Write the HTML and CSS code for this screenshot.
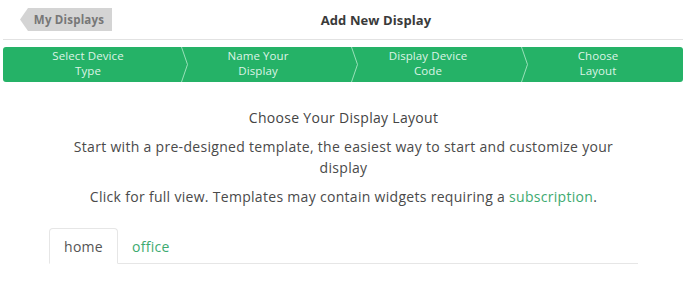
FILE: index.html
```html
<!DOCTYPE html>
<html>
<head>
<meta charset="utf-8">
<link rel="stylesheet" href="styles.css">
</head>
<body>
<div class="page">
  <header class="topbar">
    <a class="back">My Displays</a>
    <h1 class="title">Add New Display</h1>
  </header>
  <div class="divider"></div>
  <ol class="steps">
    <li class="step">Select Device<br>Type</li>
    <li class="step">Name Your<br>Display</li>
    <li class="step">Display Device<br>Code</li>
    <li class="step last">Choose<br>Layout</li>
  </ol>
  <section class="content">
    <h2 class="heading">Choose Your Display Layout</h2>
    <p class="lead">Start with a pre-designed template, the easiest way to start and customize your display</p>
    <p class="note">Click for full view. Templates may contain widgets requiring a <a class="link">subscription</a>.</p>
    <div class="tabs">
      <div class="tab active">home</div>
      <div class="tab">office</div>
    </div>
  </section>
</div>
</body>
</html>
```
FILE: styles.css
```css
* { box-sizing: border-box; }
html, body { margin: 0; padding: 0; background: #fff; }
.page { width: 696px; height: 282px; overflow: hidden; font-family: "Open Sans", "Liberation Sans", sans-serif; }
.topbar { display: flex; align-items: center; height: 39px; padding-left: 20px; }
.back {
  display: flex; align-items: center; justify-content: center;
  width: 92px; height: 23px; margin-top: 0;
  background: #d4d4d4; color: #777; font-size: 11.5px; font-weight: 700; letter-spacing: 0.2px;
  clip-path: polygon(8px 0, 100% 0, 100% 100%, 8px 100%, 0 50%);
  padding-left: 6px;
}
.title { flex: 1; margin: 0; text-align: center; font-size: 13px; font-weight: 700; color: #3a3a3a; padding-right: 56px; letter-spacing: 0.1px; }
.divider { height: 1px; background: #e2e2e2; margin: 0 13px 0 3px; }
.steps {
  list-style: none; margin: 7px 13px 0 3px; padding: 0;
  display: grid; grid-template-columns: repeat(4, 1fr); height: 35px; background: #25b267; border-radius: 3px;
}
.step { position: relative; display: flex; align-items: center; justify-content: center; text-align: center; color: #ddf4e6; font-size: 11.5px; line-height: 15px; padding-bottom: 4px; letter-spacing: 0.1px; }
.step::after {
  content: ""; position: absolute; top: 0; right: -16px; width: 8px; height: 35px;
  background: url("data:image/svg+xml,%3Csvg xmlns='http://www.w3.org/2000/svg' width='8' height='35' viewBox='0 0 8 35'%3E%3Cpath d='M0.5 0 L6.5 17.5 L0.5 35' fill='none' stroke='%23b8ecce' stroke-width='0.8'/%3E%3C/svg%3E") no-repeat;
}
.step.last::after { display: none; }
.content { margin: 0 58px 0 49px; text-align: center; color: #4a4a4a; letter-spacing: 0.3px; }
.heading { margin: 26px 0 0; font-size: 14px; font-weight: 400; line-height: 20px; color: #444; }
.lead { margin: 7.5px 8px 0; font-size: 14px; line-height: 21px; }
.note { margin: 8px 0 0; font-size: 14px; line-height: 21px; }
.link { color: #3daa70; }
.tabs { display: flex; margin-top: 21.5px; border-bottom: 1px solid #e6e6e6; height: 36px; }
.tab { padding: 0 14px; display: flex; align-items: center; font-size: 14px; color: #3daa70; margin-bottom: -1px; }
.tab.active { color: #555; border: 1px solid #e6e6e6; border-bottom-color: #fff; border-radius: 4px 4px 0 0; background: #fff; }
```
